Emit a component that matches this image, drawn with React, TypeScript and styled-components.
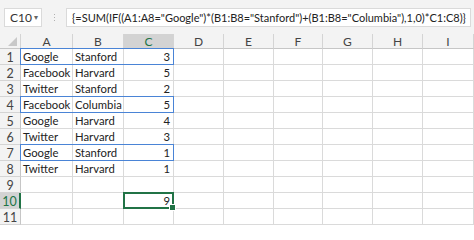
import * as React from "react";
import styled, { createGlobalStyle } from "styled-components";

const GlobalStyle = createGlobalStyle`
	html, body {
		margin: 0;
		padding: 0;
		background: #ffffff;
		overflow: hidden;
	}
	body {
		font-family: "Lato", "Liberation Sans", sans-serif;
	}
`;

const columns = ["A", "B", "C", "D", "E", "F", "G", "H", "I"];
const colWidths = [52, 51, 50, 50, 50, 49, 50, 50, 51];

const rows: Array<[string, string, string]> = [
	["Google", "Stanford", "3"],
	["Facebook", "Harvard", "5"],
	["Twitter", "Stanford", "2"],
	["Facebook", "Columbia", "5"],
	["Google", "Harvard", "4"],
	["Twitter", "Harvard", "3"],
	["Google", "Stanford", "1"],
	["Twitter", "Harvard", "1"],
	["", "", ""],
	["", "", "9"],
	["", "", ""],
];

const blueRows = [1, 4, 7];
const activeRow = 10;
const activeCol = "C";

const formula =
	'{=SUM(IF((A1:A8="Google")*(B1:B8="Stanford")+(B1:B8="Columbia"),1,0)*C1:C8)}';

const App: React.FC = (): JSX.Element => {
	return (
		<Page>
			<GlobalStyle />
			<Toolbar>
				<NameBox>
					<span>C10</span>
					<Caret>▾</Caret>
				</NameBox>
				<Grip>
					<i />
					<i />
					<i />
				</Grip>
				<FormulaBox>{formula}</FormulaBox>
			</Toolbar>

			<Sheet $widths={colWidths}>
				<Corner $row={1} $col={1} />
				{columns.map((c, ci) => (
					<ColHeader key={c} $row={1} $col={ci + 2} $active={c === activeCol}>
						{c}
					</ColHeader>
				))}

				{rows.map((r, i) => {
					const n = i + 1;
					return (
						<React.Fragment key={n}>
							<RowHeader $row={n + 1} $col={1} $active={n === activeRow}>
								{n}
							</RowHeader>
							{columns.map((c, ci) => (
								<Cell key={c} $row={n + 1} $col={ci + 2} $number={ci === 2}>
									{r[ci] ?? ""}
								</Cell>
							))}
						</React.Fragment>
					);
				})}

				{blueRows.map((n) => (
					<RangeBox key={n} $row={n + 1} />
				))}
				<ActiveBox $row={activeRow + 1}>
					<Handle />
				</ActiveBox>
			</Sheet>
		</Page>
	);
};

export default App;

const Page = styled.div`
	width: 474px;
	height: 225px;
	background: #f3f3f3;
	overflow: hidden;
`;

const Toolbar = styled.div`
	display: flex;
	align-items: center;
	height: 34px;
	padding: 0 3px 0 4px;
	box-sizing: border-box;
	background: #f3f3f3;
`;

const NameBox = styled.div`
	display: flex;
	align-items: center;
	justify-content: space-between;
	width: 38px;
	height: 19px;
	box-sizing: border-box;
	padding: 0 3px 0 5px;
	background: #ffffff;
	border: 1px solid #dadada;
	font-size: 12px;
	color: #333;
`;

const Caret = styled.span`
	font-size: 8px;
	color: #666;
`;

const Grip = styled.div`
	display: flex;
	flex-direction: column;
	gap: 2px;
	margin: 0 11px 0 12px;

	i {
		display: block;
		width: 1px;
		height: 1px;
		background: #b0b0b0;
	}
`;

const FormulaBox = styled.div`
	flex: 1;
	height: 19px;
	box-sizing: border-box;
	padding: 0 0 0 5px;
	display: flex;
	align-items: center;
	background: #ffffff;
	border: 1px solid #dadada;
	font-size: 11px;
	color: #222;
	white-space: nowrap;
	overflow: hidden;
`;

const Sheet = styled.div<{ $widths: number[] }>`
	display: grid;
	grid-template-columns: 21px ${(p) => p.$widths.map((w) => `${w}px`).join(" ")};
	grid-template-rows: 15px repeat(11, 16px);
	background: #ffffff;
`;

type Place = { $row: number; $col: number };

const HeaderBase = styled.div<Place & { $active?: boolean }>`
	grid-row: ${(p) => p.$row};
	grid-column: ${(p) => p.$col};
	display: flex;
	align-items: center;
	justify-content: center;
	box-sizing: border-box;
	font-size: 12px;
	background: ${(p) => (p.$active ? "#d3d3d3" : "#f3f3f3")};
	color: ${(p) => (p.$active ? "#217346" : "#444")};
`;

const Corner = styled(HeaderBase)`
	position: relative;
	border-right: 1px solid #d4d4d4;
	border-bottom: 1px solid #c6c6c6;

	&::after {
		content: "";
		position: absolute;
		right: 3px;
		bottom: 2px;
		width: 0;
		height: 0;
		border-left: 9px solid transparent;
		border-bottom: 9px solid #c8c8c8;
	}
`;

const ColHeader = styled(HeaderBase)`
	border-right: 1px solid #d4d4d4;
	border-bottom: 1px solid ${(p) => (p.$active ? "#ababab" : "#c6c6c6")};
	padding-top: 1px;
`;

const RowHeader = styled(HeaderBase)`
	border-bottom: 1px solid #d4d4d4;
	border-right: ${(p) => (p.$active ? "2px solid #217346" : "1px solid #c6c6c6")};
	font-size: 12.5px;
	padding-top: 1px;
`;

const Cell = styled.div<Place & { $number?: boolean }>`
	grid-row: ${(p) => p.$row};
	grid-column: ${(p) => p.$col};
	box-sizing: border-box;
	border-right: 1px solid #dadada;
	border-bottom: 1px solid #dadada;
	display: flex;
	align-items: flex-end;
	justify-content: ${(p) => (p.$number ? "flex-end" : "flex-start")};
	padding: 0 3px 0 2px;
	font-size: 11.3px;
	line-height: 15px;
	color: #222;
	white-space: nowrap;
	overflow: hidden;
`;

const RangeBox = styled.div<{ $row: number }>`
	grid-row: ${(p) => p.$row};
	grid-column: 2 / 5;
	margin: -1px 0 0 -1px;
	border: 1.5px solid #4a84d6;
	pointer-events: none;
	z-index: 1;
`;

const ActiveBox = styled.div<{ $row: number }>`
	grid-row: ${(p) => p.$row};
	grid-column: 4 / 5;
	position: relative;
	margin: -1px 0 0 -1px;
	border: 2px solid #217346;
	pointer-events: none;
	z-index: 2;
`;

const Handle = styled.div`
	position: absolute;
	right: -4px;
	bottom: -4px;
	width: 5px;
	height: 5px;
	background: #217346;
	border: 1px solid #ffffff;
`;
